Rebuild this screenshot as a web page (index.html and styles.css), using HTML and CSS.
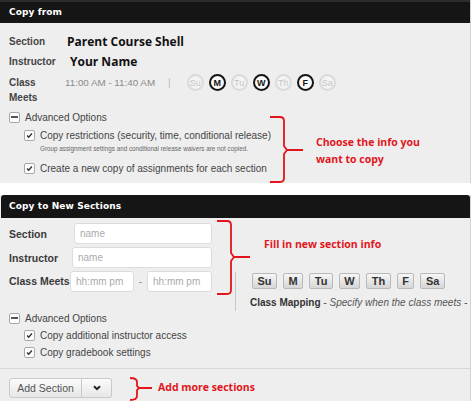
FILE: index.html
```html
<!DOCTYPE html>
<html>
<head>
<meta charset="utf-8">
<title>Copy Sections</title>
<link rel="stylesheet" href="styles.css">
</head>
<body>
<section class="panel panel-from">
  <header class="panel-head">Copy from</header>
  <div class="from-body">
    <div class="info-row"><span class="info-label">Section</span><span class="info-value">Parent Course Shell</span></div>
    <div class="info-row row-inst"><span class="info-label">Instructor</span><span class="info-value value-shift">Your Name</span></div>
    <div class="info-row meets-row">
      <span class="info-label meets-label">Class<br>Meets</span>
      <span class="meets-time">11:00 AM - 11:40 AM</span>
      <span class="meets-sep">|</span>
      <span class="day-dots">
        <span class="dot">Su</span><span class="dot on">M</span><span class="dot">Tu</span><span class="dot on">W</span><span class="dot">Th</span><span class="dot on">F</span><span class="dot">Sa</span>
      </span>
    </div>
    <div class="adv adv-from">
      <div class="adv-head"><span class="minus-box"></span>Advanced Options</div>
      <div class="check-row"><span class="checkbox"><svg viewBox="0 0 11 11"><path d="M2.5 5.6l2 2.1 4-4.6"/></svg></span>Copy restrictions (security, time, conditional release)</div>
      <div class="note">Group assignment settings and conditional release waivers are not copied.</div>
      <div class="check-row check-gap"><span class="checkbox"><svg viewBox="0 0 11 11"><path d="M2.5 5.6l2 2.1 4-4.6"/></svg></span>Create a new copy of assignments for each section</div>
    </div>
  </div>
  <svg class="brace brace-copy" viewBox="0 0 37 70"><path d="M2 2H12Q16 2 16 6V31L19 35H35M19 35L16 39V63Q16 67 12 67H2"/></svg>
  <div class="annot-text annot-copy">Choose the info you<br>want to copy</div>
</section>

<section class="panel panel-to">
  <header class="panel-head">Copy to New Sections</header>
  <div class="to-body">
    <div class="field-row"><span class="field-label">Section</span><input class="text-input in-section" placeholder="name"></div>
    <div class="field-row"><span class="field-label">Instructor</span><input class="text-input in-inst" placeholder="name"></div>
    <div class="field-row meets-fields">
      <span class="field-label">Class Meets</span>
      <input class="text-input in-time" placeholder="hh:mm pm">
      <span class="dash">-</span>
      <input class="text-input in-time2" placeholder="hh:mm pm">
      <div class="mapping">
        <div class="day-buttons">
          <span class="day-btn">Su</span><span class="day-btn">M</span><span class="day-btn">Tu</span><span class="day-btn">W</span><span class="day-btn">Th</span><span class="day-btn">F</span><span class="day-btn">Sa</span>
        </div>
        <div class="mapping-text"><b>Class Mapping</b> <i>- Specify when the class meets -</i></div>
      </div>
    </div>
    <div class="adv adv-to">
      <div class="adv-head"><span class="minus-box"></span>Advanced Options</div>
      <div class="check-row"><span class="checkbox"><svg viewBox="0 0 11 11"><path d="M2.5 5.6l2 2.1 4-4.6"/></svg></span>Copy additional instructor access</div>
      <div class="check-row"><span class="checkbox"><svg viewBox="0 0 11 11"><path d="M2.5 5.6l2 2.1 4-4.6"/></svg></span>Copy gradebook settings</div>
    </div>
  </div>
  <footer class="panel-foot">
    <div class="btn-group">
      <span class="btn btn-main">Add Section</span>
      <span class="btn btn-drop"><svg viewBox="0 0 8 6"><path d="M1 1.2L4 4.2L7 1.2"/></svg></span>
    </div>
  </footer>
  <svg class="brace brace-fill" viewBox="0 0 38 78"><path d="M2 2H12Q16 2 16 6V34L19 38H35M19 38L16 42V71Q16 75 12 75H2"/></svg>
  <div class="annot-text annot-fill">Fill in new section info</div>
  <svg class="brace brace-add" viewBox="0 0 26 26"><path d="M2 2Q9 2 9 6V10L11 12H24M11 12L9 14V20Q9 24 2 24"/></svg>
  <div class="annot-text annot-add">Add more sections</div>
</section>
</body>
</html>
```

FILE: styles.css
```css
* { box-sizing: border-box; }

html, body {
  margin: 0;
  padding: 0;
  background: #ffffff;
}

body {
  width: 474px;
  height: 403px;
  overflow: hidden;
  font-family: "Liberation Sans", Arial, sans-serif;
  color: #333;
}

.panel {
  position: relative;
  width: 471px;
  background: #eeeeee;
  border-right: 1px solid #d2d2d2;
}

.panel-to { margin-top: 12px; }

.panel-head {
  height: 23px;
  background: #151515;
  color: #fff;
  font-family: "DejaVu Sans", sans-serif;
  font-weight: bold;
  font-size: 9px;
  line-height: 23px;
  padding-left: 9px;
  letter-spacing: 0.1px;
}

.panel-from .panel-head {
  border-top: 2px solid #2c2c2c;
  line-height: 21px;
}

.panel-to .panel-head {
  border-radius: 3px 3px 0 0;
  margin-left: 1px;
  padding-left: 8px;
}

/* ---------- Copy from ---------- */
.from-body {
  height: 160px;
  padding: 8px 0 0 9px;
}

.info-row {
  display: flex;
  align-items: center;
  height: 20px;
}

.row-inst { height: 21px; }

.info-label {
  width: 58px;
  font-weight: bold;
  font-size: 10px;
  color: #444;
}

.info-value {
  font-family: "Open Sans", sans-serif;
  font-weight: bold;
  font-size: 12px;
  color: #111;
}

.value-shift { margin-left: 3px; }

.meets-row {
  align-items: flex-start;
  height: 30px;
  margin-top: 3px;
}

.meets-label {
  width: 56px;
  line-height: 15px;
}

.meets-time {
  font-size: 9.8px;
  color: #8a8a8a;
  line-height: 15px;
}

.meets-sep {
  font-size: 10px;
  color: #bbb;
  line-height: 15px;
  margin-left: 13px;
}

.day-dots {
  display: flex;
  gap: 5px;
  margin-left: 16px;
  margin-top: -1px;
}

.dot {
  width: 17px;
  height: 17px;
  border: 2px solid #dadada;
  border-radius: 50%;
  font-size: 9px;
  color: #c6c6c6;
  display: flex;
  align-items: center;
  justify-content: center;
  background: #f3f3f3;
}

.dot.on {
  border-color: #151515;
  color: #151515;
  font-weight: bold;
  background: #fafafa;
}

/* ---------- Advanced options ---------- */
.adv-from { margin-top: 5px; }

.adv-head {
  display: flex;
  align-items: center;
  height: 14px;
  font-size: 10px;
  color: #444;
}

.minus-box {
  width: 11px;
  height: 11px;
  border: 1px solid #a8a8a8;
  border-radius: 2px;
  background: #fff;
  margin-right: 5px;
  display: flex;
  align-items: center;
  justify-content: center;
}

.minus-box::after {
  content: "";
  width: 7px;
  height: 2px;
  background: #555;
}

.check-row {
  display: flex;
  align-items: center;
  height: 14px;
  padding-left: 15px;
  font-size: 10px;
  color: #444;
  margin-top: 4px;
}

.check-gap { margin-top: 7px; }

.adv-to .check-row { margin-top: 3px; }

.checkbox {
  width: 11px;
  height: 11px;
  border: 1px solid #a8a8a8;
  border-radius: 2px;
  background: #fff;
  margin-right: 5px;
  display: flex;
}

.checkbox svg {
  width: 9px;
  height: 9px;
}

.checkbox path {
  fill: none;
  stroke: #333;
  stroke-width: 1.7;
}

.note {
  padding-left: 31px;
  margin-top: 2px;
  font-size: 6.3px;
  line-height: 10px;
  color: #666;
}

/* ---------- Copy to new sections ---------- */
.to-body {
  padding: 5px 0 0 9px;
}

.field-row {
  display: flex;
  align-items: center;
  height: 21px;
  margin-bottom: 3px;
}

.field-label {
  width: 61px;
  font-weight: bold;
  font-size: 10.5px;
  color: #3a3a3a;
}

.text-input {
  height: 21px;
  border: 1px solid #dcdcdc;
  border-radius: 3px;
  background: #fff;
  font-family: "Liberation Sans", Arial, sans-serif;
  font-size: 10px;
  padding: 0 0 0 5px;
  margin: 0;
  color: #333;
  outline: none;
}

.text-input::placeholder { color: #aaa; }

.in-section { width: 138px; margin-left: 4px; }
.in-inst { width: 140px; margin-left: 2px; }
.in-time { width: 64px; }
.in-time2 { width: 65px; }

.dash {
  width: 13px;
  text-align: center;
  font-size: 10px;
  line-height: 21px;
  color: #888;
}

.meets-fields {
  align-items: flex-start;
  height: 40px;
  margin-bottom: 0;
}

.meets-fields .field-label { line-height: 21px; }

.mapping {
  margin-left: 23px;
  margin-top: 1px;
  height: 39px;
  border-left: 1px solid #c8c8c8;
  padding-left: 14px;
}

.day-buttons {
  display: flex;
  gap: 6px;
  margin-top: 1px;
  margin-left: 2px;
}

.day-btn {
  height: 16px;
  padding: 0 4.5px;
  border: 1px solid #b9b9b9;
  border-radius: 2px;
  background: linear-gradient(#f6f6f6, #d6d6d6);
  font-weight: bold;
  font-size: 11px;
  line-height: 14px;
  color: #333;
}

.mapping-text {
  margin-top: 8px;
  font-size: 10px;
  color: #333;
  white-space: nowrap;
}

.mapping-text i { color: #555; }

.panel-foot {
  margin-top: 9px;
  border-top: 1px solid #d6d6d6;
  padding: 9px 0 3px 9px;
}

.btn-group { display: flex; }

.btn {
  height: 20px;
  border: 1px solid #c9c9c9;
  background: linear-gradient(#fbfbfb, #e7e7e7);
  display: flex;
  align-items: center;
  justify-content: center;
  font-size: 10.5px;
  color: #555;
}

.btn-main {
  width: 73px;
  border-radius: 3px 0 0 3px;
}

.btn-drop {
  width: 30px;
  border-left: none;
  border-radius: 0 3px 3px 0;
}

.btn-drop svg { width: 8px; height: 6px; }

.btn-drop path {
  fill: none;
  stroke: #222;
  stroke-width: 2;
}

/* ---------- Annotations (overlaid) ---------- */
.brace {
  position: absolute;
  overflow: visible;
}

.brace path {
  fill: none;
  stroke: #e3151c;
  stroke-width: 1.8;
}

.brace-copy { left: 268px; top: 115px; width: 37px; height: 70px; }
.brace-fill { left: 215px; top: 24px; width: 38px; height: 78px; }
.brace-add { left: 128px; top: 181px; width: 26px; height: 26px; }

.annot-text {
  position: absolute;
  font-family: "Open Sans", sans-serif;
  font-weight: bold;
  font-size: 10.5px;
  line-height: 17px;
  color: #e3151c;
  white-space: nowrap;
}

.annot-copy { left: 316px; top: 134px; }
.annot-fill { left: 264px; top: 41px; }
.annot-add { left: 158px; top: 184px; }
```
